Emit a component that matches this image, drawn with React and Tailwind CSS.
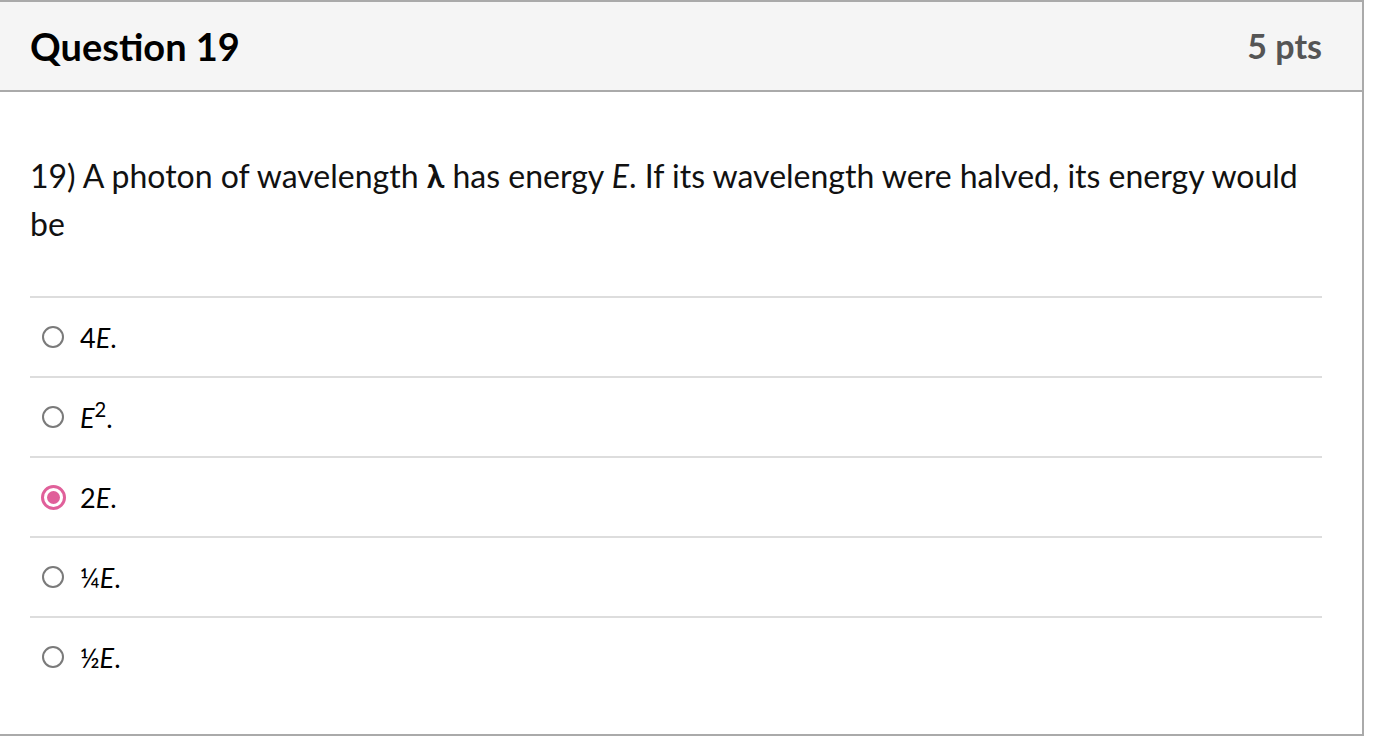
export default function App() {
  const answers = [
    { key: "a", content: <><span>4</span><i>E</i><span>.</span></>, selected: false },
    { key: "b", content: <><i>E</i><sup>2</sup><span>.</span></>, selected: false },
    { key: "c", content: <><span>2</span><i>E</i><span>.</span></>, selected: true },
    { key: "d", content: <><span>¼</span><i>E</i><span>.</span></>, selected: false },
    { key: "e", content: <><span>½</span><i>E</i><span>.</span></>, selected: false },
  ];
  return (
    <div className="w-[1382px] h-[752px] bg-white" style={{ fontFamily: "Lato, 'Noto Sans', sans-serif" }}>
      <div className="w-[1364px] border-t-2 border-r-2 border-b-2 border-[#aaaaaa] bg-white">
        <div className="h-[90px] bg-[#f5f5f5] border-b-2 border-[#aaaaaa] flex items-center justify-between pl-[30px] pr-[40px]">
          <h2 className="text-[38px] font-bold text-black leading-none">Question 19</h2>
          <div className="text-[34px] font-bold text-[#555555] leading-none">5 pts</div>
        </div>
        <div className="pl-[30px] pr-[40px] pt-[60px] pb-[38px]">
          <p className="text-[32px] leading-[48px] text-[#111111] pb-[48px]">
            19) A photon of wavelength <b>λ</b> has energy <i>E</i>. If its wavelength were halved, its energy would be
          </p>
          <div>
            {answers.map((a) => (
              <div key={a.key} className="h-[80px] border-t-2 border-[#dddddd] flex items-center pl-[10px]">
                <span className="w-[26px] h-[26px] flex items-center justify-center">
                  {a.selected ? (
                    <span className="w-[25px] h-[25px] rounded-full border-[3px] border-[#e0609a] flex items-center justify-center">
                      <span className="w-[13px] h-[13px] rounded-full bg-[#e0609a]" />
                    </span>
                  ) : (
                    <span className="w-[22px] h-[22px] rounded-full border-2 border-[#7a7a7a]" />
                  )}
                </span>
                <span className="ml-[14px] text-[27px] text-black leading-none">{a.content}</span>
              </div>
            ))}
          </div>
        </div>
      </div>
    </div>
  );
}
